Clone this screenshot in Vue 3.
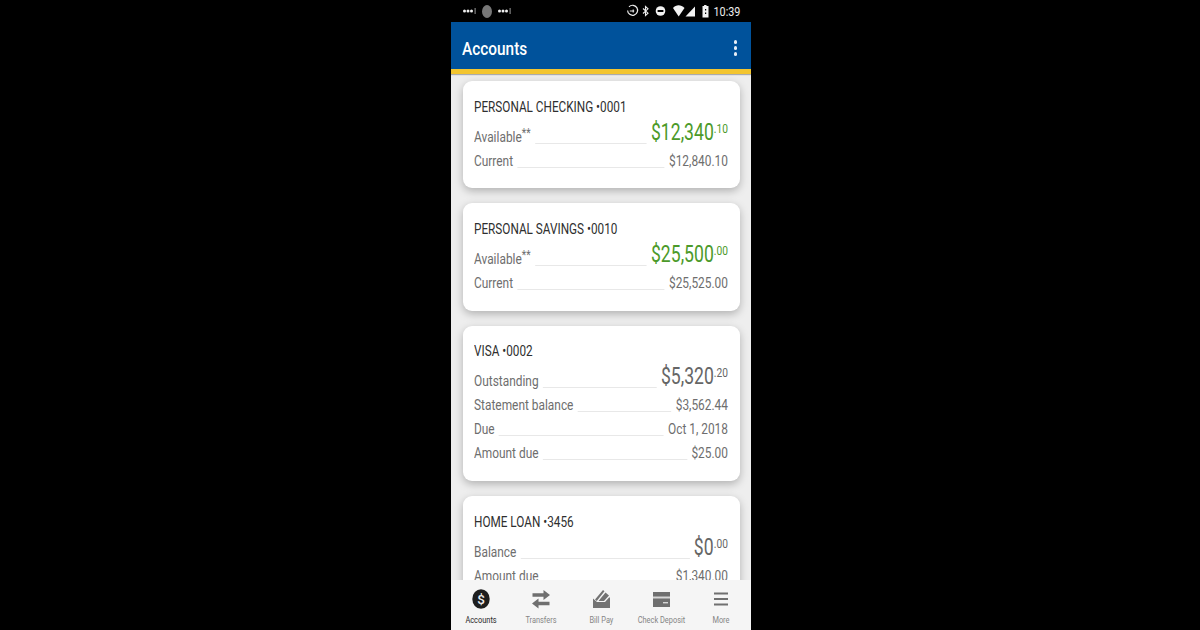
<script setup>
const accounts = [
  { name: 'PERSONAL CHECKING •0001', green: true, rows: [
    { label: 'Available', sup: true, whole: '$12,340', cents: '.10' },
    { label: 'Current', value: '$12,840.10' } ] },
  { name: 'PERSONAL SAVINGS •0010', green: true, rows: [
    { label: 'Available', sup: true, whole: '$25,500', cents: '.00' },
    { label: 'Current', value: '$25,525.00' } ] },
  { name: 'VISA •0002', rows: [
    { label: 'Outstanding', whole: '$5,320', cents: '.20' },
    { label: 'Statement balance', value: '$3,562.44' },
    { label: 'Due', value: 'Oct 1, 2018' },
    { label: 'Amount due', value: '$25.00' } ] },
  { name: 'HOME LOAN •3456', rows: [
    { label: 'Balance', whole: '$0', cents: '.00' },
    { label: 'Amount due', value: '$1,340.00' } ] }
]
const tabs = ['Accounts', 'Transfers', 'Bill Pay', 'Check Deposit', 'More']
</script>

<template>
  <div class="page">
    <div class="phone">
      <div class="status">
        <div class="status-left">
          <svg width="13" height="6" viewBox="0 0 13 6"><g fill="#f0f0f0"><circle cx="1.500" cy="3" r="1.500"/><circle cx="5" cy="3" r="1.500"/><circle cx="8.500" cy="3" r="1.500"/></g><rect x="11.600" y="0" width="1" height="6" fill="#999"/></svg>
          <span class="blob"></span>
          <svg width="13" height="6" viewBox="0 0 13 6"><g fill="#f0f0f0"><circle cx="1.500" cy="3" r="1.500"/><circle cx="5" cy="3" r="1.500"/><circle cx="8.500" cy="3" r="1.500"/></g><rect x="11.600" y="0" width="1" height="6" fill="#999"/></svg>
        </div>
        <div class="status-right">
          <svg width="82" height="14" viewBox="0 0 82 14">
            <path d="M2 2.800A5 5 0 1 1 .6 6.500" fill="none" stroke="#eee" stroke-width="1.200"/>
            <path d="M2.800 7h4.400M6.200 5.500V8.500" stroke="#eee" stroke-width="1.100" fill="none"/>
            <path d="M16 4.500l5 4.700-2.500 2.300V2.500L21 4.800l-5 4.700" fill="none" stroke="#eee" stroke-width="1.100"/>
            <circle cx="33.500" cy="7" r="4.800" fill="#f2f2f2"/>
            <rect x="30.600" y="6" width="5.800" height="2" fill="#000"/>
            <path d="M46 3.600C49-.2 54 -.2 57.500 3.600L51.700 12z" fill="#f2f2f2" transform="translate(0 .5)"/>
            <path d="M68 2.500v10h-9.500z" fill="#f2f2f2"/>
            <path d="M77.600 1h2.400v1H82v11.500h-6V2h1.600z" fill="#f2f2f2" transform="translate(-.5 0)"/>
            <path d="M78 5h1.200v1.500H78zM78 8.500h1.200V10H78z" fill="#000"/>
          </svg>
          <span class="clock"><span>10:39</span></span>
        </div>
      </div>

      <header class="appbar">
        <span class="title">Accounts</span>
        <span class="kebab"><i></i><i></i><i></i></span>
      </header>
      <div class="stripe"></div>

      <main class="list">
        <section v-for="a in accounts" :key="a.name" class="card">
          <h2 class="name">{{ a.name }}</h2>
          <div v-for="(r, i) in a.rows" :key="r.label" class="row" :class="{ first: i === 0 }">
            <span class="label">{{ r.label }}<sup v-if="r.sup" class="stars">**</sup></span>
            <span class="rule"></span>
            <span v-if="r.whole" class="big" :class="{ green: a.green }">
              <span class="whole" :style="{ '--n': r.whole.length }">{{ r.whole }}</span><small class="cents">{{ r.cents }}</small>
            </span>
            <span v-else class="val">{{ r.value }}</span>
          </div>
        </section>
      </main>

      <nav class="tabs">
        <div v-for="(t, i) in tabs" :key="t" class="tab" :class="{ active: i === 0 }">
          <svg v-if="i === 0" width="24" height="24" viewBox="0 0 24 24" class="ic">
            <ellipse cx="12" cy="12" rx="8.700" ry="9.800" fill="#1e1e1e"/>
            <text x="12" y="16.800" text-anchor="middle" fill="#eee" font-size="13.500" font-weight="500" font-family="Roboto, sans-serif">$</text>
          </svg>
          <svg v-else-if="i === 1" width="24" height="24" viewBox="0 0 24 24" class="ic">
            <path d="M14.500 3l6.500 5-6.500 5v-3.200H3.500V6.200h11zM9.500 11.500v3.200h11v3.600h-11V21.500L3 16.500z" fill="#6f6f6f"/>
          </svg>
          <svg v-else-if="i === 2" width="24" height="24" viewBox="0 0 24 24" class="ic">
            <path d="M4 11.500l4 3.500h8l4.500-5 .5 1.500V21H4z" fill="#737373"/>
            <path d="M6 12.500L14 3l1.500 1.300L7.800 14zM9.500 14L16.500 5.500l3.500 3-5 5.500z" fill="#737373"/>
          </svg>
          <svg v-else-if="i === 3" width="24" height="24" viewBox="0 0 24 24" class="ic">
            <path d="M4 5h17v15H4z" fill="#6f6f6f"/>
            <path d="M4 9.500h17v2H4z" fill="#d6d6d6"/>
            <path d="M14 15h5v1.400h-5z" fill="#d6d6d6"/>
          </svg>
          <svg v-else width="24" height="24" viewBox="0 0 24 24" class="ic">
            <path d="M5 5.500h14v2H5zM5 11h14v2H5zM5 16.500h14v2H5z" fill="#707070"/>
          </svg>
          <span class="tab-label">{{ t }}</span>
        </div>
      </nav>
    </div>
  </div>
</template>

<style>
body { margin: 0; background: #000; }
</style>

<style scoped>
.page {
  width: 1200px;
  height: 630px;
  background: #000;
  display: flex;
  justify-content: center;
  overflow: hidden;
  font-family: Roboto, "Liberation Sans", sans-serif;
}
.phone {
  width: 300px;
  height: 630px;
  margin-left: 2px;
  display: flex;
  flex-direction: column;
  background: #eee;
}
.status {
  height: 22px;
  flex: none;
  background: #000;
  display: flex;
  justify-content: space-between;
  align-items: center;
  padding: 0 11px 0 12px;
  color: #fff;
}
.status-left, .status-right { display: flex; align-items: center; }
.status-left { gap: 6px; }
.status-right { gap: 5px; }
.blob { width: 10px; height: 13px; border-radius: 50%; background: #777; }
.clock {
  width: 26px;
  display: flex;
  justify-content: flex-end;
  font-size: 13px;
  color: #eee;
}
.clock span { display: inline-block; transform: scaleX(0.83); transform-origin: right; }
.appbar {
  height: 47px;
  flex: none;
  box-sizing: border-box;
  background: #00529b;
  display: flex;
  justify-content: space-between;
  align-items: center;
  padding: 5px 14px 0 11px;
}
.title {
  color: #fff;
  font-size: 19px;
  font-weight: 500;
  display: inline-block;
  transform: scaleX(0.81);
  transform-origin: left;
}
.kebab { display: flex; flex-direction: column; gap: 2.500px; }
.kebab i { width: 3.500px; height: 3.500px; border-radius: 50%; background: #e6eef6; display: block; }
.stripe {
  flex: none;
  height: 5px;
  background: #f3c52f;
  box-shadow: 0 1px 1px rgba(0, 0, 0, 0.28);
  position: relative;
  z-index: 1;
}
.list {
  flex: 1;
  min-height: 0;
  overflow: hidden;
  padding: 7px 11px 0 12px;
  display: flex;
  flex-direction: column;
  gap: 15px;
  background: #eee;
}
.card {
  flex: none;
  background: #fff;
  border-radius: 9px;
  padding: 15.600px 12px 18.800px 11px;
  box-shadow: 0 3px 9px rgba(0, 0, 0, 0.26);
  box-sizing: border-box;
  overflow: hidden;
}
.name {
  margin: 0;
  height: 20px;
  line-height: 20px;
  font-size: 14px;
  font-weight: 400;
  color: #2f2f2f;
  white-space: nowrap;
  transform: scaleX(0.84);
  transform-origin: left;
}
.row {
  display: flex;
  align-items: flex-end;
  height: 24px;
  width: 117.647%;
  transform: scaleX(0.85);
  transform-origin: left;
  font-size: 14px;
  color: #6e6e6e;
  white-space: nowrap;
}
.row.first { height: 29px; }
.label { line-height: 18px; flex: none; }
.stars { font-size: 12px; line-height: 0; vertical-align: 5px; }
.rule {
  flex: 1;
  min-width: 0;
  margin: 0 5px 2px 5px;
  height: 1px;
  background: #e8e8e8;
}
.val { line-height: 18px; }
.big {
  display: flex;
  align-items: baseline;
  font-size: 23px;
  line-height: 26px;
  color: #666;
}
.whole {
  display: inline-block;
  transform: scaleX(0.9);
  transform-origin: right;
  margin-left: calc(var(--n) * -1.170px);
}
.big.green { color: #4c9a2a; }
.cents { font-size: 12px; position: relative; top: -7px; line-height: 0; }
.tabs {
  flex: none;
  height: 50px;
  background: #f5f5f5;
  display: grid;
  grid-template-columns: repeat(5, 60px);
}
.tab {
  display: flex;
  flex-direction: column;
  align-items: center;
  padding-top: 7px;
  color: #858585;
}
.ic { flex: none; }
.tab-label {
  font-size: 9.500px;
  margin-top: 3px;
  line-height: 12px;
  white-space: nowrap;
  transform: scaleX(0.78);
}
.tab.active { color: #2a2a2a; }
</style>
